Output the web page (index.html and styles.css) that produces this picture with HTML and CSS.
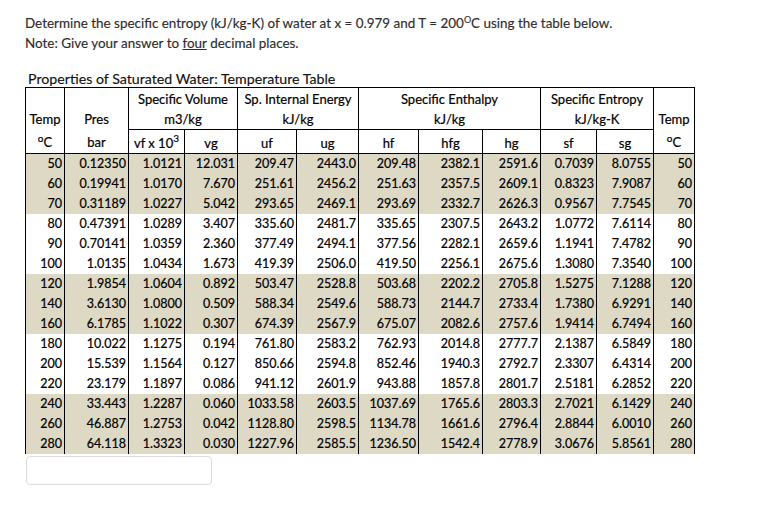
FILE: index.html
```html
<!DOCTYPE html>
<html>
<head>
<meta charset="utf-8">
<link rel="stylesheet" href="styles.css">
</head>
<body>
<div class="page">
  <div class="question">
    <p>Determine the specific entropy (kJ/kg-K) of water at x = 0.979 and T = 200<sup class="qdeg">O</sup>C using the table below.</p>
    <p>Note: Give your answer to <u>four</u> decimal places.</p>
  </div>
  <div class="caption">Properties of Saturated Water: Temperature Table</div>
  <table class="steam">
    <colgroup>
      <col class="c-temp"><col class="c-pres"><col class="c-vf"><col class="c-vg"><col class="c-uf"><col class="c-ug"><col class="c-hf"><col class="c-hfg"><col class="c-hg"><col class="c-sf"><col class="c-sg"><col class="c-temp2">
    </colgroup>
    <thead>
      <tr class="hrow1">
        <th rowspan="2" class="stack">Temp<br><sup class="deg">o</sup>C</th>
        <th rowspan="2" class="stack">Pres<br>bar</th>
        <th colspan="2" class="grp"><span class="clip">Specific Volume</span><br>m3/kg</th>
        <th colspan="2" class="grp">Sp. Internal Energy<br>kJ/kg</th>
        <th colspan="3" class="grp">Specific Enthalpy<br>kJ/kg</th>
        <th colspan="2" class="grp">Specific Entropy<br>kJ/kg-K</th>
        <th rowspan="2" class="stack">Temp<br><sup class="deg">o</sup>C</th>
      </tr>
      <tr class="hrow2">
        <th>vf x 10<sup class="exp">3</sup></th>
        <th>vg</th>
        <th>uf</th>
        <th>ug</th>
        <th>hf</th>
        <th>hfg</th>
        <th>hg</th>
        <th>sf</th>
        <th>sg</th>
      </tr>
    </thead>
    <tbody>
      <tr class="shade"><td>50</td><td>0.12350</td><td>1.0121</td><td>12.031</td><td>209.47</td><td>2443.0</td><td>209.48</td><td>2382.1</td><td>2591.6</td><td>0.7039</td><td>8.0755</td><td>50</td></tr>
      <tr class="shade"><td>60</td><td>0.19941</td><td>1.0170</td><td>7.670</td><td>251.61</td><td>2456.2</td><td>251.63</td><td>2357.5</td><td>2609.1</td><td>0.8323</td><td>7.9087</td><td>60</td></tr>
      <tr class="shade"><td>70</td><td>0.31189</td><td>1.0227</td><td>5.042</td><td>293.65</td><td>2469.1</td><td>293.69</td><td>2332.7</td><td>2626.3</td><td>0.9567</td><td>7.7545</td><td>70</td></tr>
      <tr><td>80</td><td>0.47391</td><td>1.0289</td><td>3.407</td><td>335.60</td><td>2481.7</td><td>335.65</td><td>2307.5</td><td>2643.2</td><td>1.0772</td><td>7.6114</td><td>80</td></tr>
      <tr><td>90</td><td>0.70141</td><td>1.0359</td><td>2.360</td><td>377.49</td><td>2494.1</td><td>377.56</td><td>2282.1</td><td>2659.6</td><td>1.1941</td><td>7.4782</td><td>90</td></tr>
      <tr><td>100</td><td>1.0135</td><td>1.0434</td><td>1.673</td><td>419.39</td><td>2506.0</td><td>419.50</td><td>2256.1</td><td>2675.6</td><td>1.3080</td><td>7.3540</td><td>100</td></tr>
      <tr class="shade"><td>120</td><td>1.9854</td><td>1.0604</td><td>0.892</td><td>503.47</td><td>2528.8</td><td>503.68</td><td>2202.2</td><td>2705.8</td><td>1.5275</td><td>7.1288</td><td>120</td></tr>
      <tr class="shade"><td>140</td><td>3.6130</td><td>1.0800</td><td>0.509</td><td>588.34</td><td>2549.6</td><td>588.73</td><td>2144.7</td><td>2733.4</td><td>1.7380</td><td>6.9291</td><td>140</td></tr>
      <tr class="shade"><td>160</td><td>6.1785</td><td>1.1022</td><td>0.307</td><td>674.39</td><td>2567.9</td><td>675.07</td><td>2082.6</td><td>2757.6</td><td>1.9414</td><td>6.7494</td><td>160</td></tr>
      <tr><td>180</td><td>10.022</td><td>1.1275</td><td>0.194</td><td>761.80</td><td>2583.2</td><td>762.93</td><td>2014.8</td><td>2777.7</td><td>2.1387</td><td>6.5849</td><td>180</td></tr>
      <tr><td>200</td><td>15.539</td><td>1.1564</td><td>0.127</td><td>850.66</td><td>2594.8</td><td>852.46</td><td>1940.3</td><td>2792.7</td><td>2.3307</td><td>6.4314</td><td>200</td></tr>
      <tr><td>220</td><td>23.179</td><td>1.1897</td><td>0.086</td><td>941.12</td><td>2601.9</td><td>943.88</td><td>1857.8</td><td>2801.7</td><td>2.5181</td><td>6.2852</td><td>220</td></tr>
      <tr class="shade"><td>240</td><td>33.443</td><td>1.2287</td><td>0.060</td><td>1033.58</td><td>2603.5</td><td>1037.69</td><td>1765.6</td><td>2803.3</td><td>2.7021</td><td>6.1429</td><td>240</td></tr>
      <tr class="shade"><td>260</td><td>46.887</td><td>1.2753</td><td>0.042</td><td>1128.80</td><td>2598.5</td><td>1134.78</td><td>1661.6</td><td>2796.4</td><td>2.8844</td><td>6.0010</td><td>260</td></tr>
      <tr class="shade"><td>280</td><td>64.118</td><td>1.3323</td><td>0.030</td><td>1227.96</td><td>2585.5</td><td>1236.50</td><td>1542.4</td><td>2778.9</td><td>3.0676</td><td>5.8561</td><td>280</td></tr>
    </tbody>
  </table>
  <div class="answer"></div>
</div>
</body>
</html>
```

FILE: styles.css
```css
html, body {
  margin: 0;
  padding: 0;
  background: #fff;
}

.page {
  padding: 14px 0 0 25px;
}

.question {
  font-family: Lato, "Noto Sans", sans-serif;
  font-size: 13.45px;
  line-height: 19.5px;
  color: #2d2d2d;
  -webkit-text-stroke: 0.15px #2d2d2d;
}

.question p {
  margin: 0;
}

.qdeg {
  font-size: 9px;
  line-height: 0;
  vertical-align: baseline;
  position: relative;
  top: -5px;
}

.caption {
  font-family: Lato, sans-serif;
  font-size: 14.2px;
  line-height: 16px;
  color: #111;
  margin: 18px 0 0 3px;
  -webkit-text-stroke: 0.15px #111;
}

.steam {
  border-collapse: collapse;
  table-layout: fixed;
  width: 669px;
  font-family: Lato, sans-serif;
  font-size: 12.5px;
  color: #000;
  -webkit-text-stroke: 0.2px #000;
}

.c-temp { width: 39px; }
.c-pres { width: 64px; }
.c-vf { width: 56px; }
.c-vg { width: 53px; }
.c-uf { width: 59px; }
.c-ug { width: 62px; }
.c-hf { width: 60px; }
.c-hfg { width: 64px; }
.c-hg { width: 58px; }
.c-sf { width: 56px; }
.c-sg { width: 57px; }
.c-temp2 { width: 41px; }

.steam th {
  font-weight: normal;
  font-size: 13px;
  border: 1px solid #000;
  padding: 0;
  text-align: center;
  white-space: nowrap;
  overflow: hidden;
}

.hrow1 {
  height: 40px;
}

.hrow1 .grp {
  line-height: 20px;
  vertical-align: middle;
  padding-top: 1px;
}

.hrow1 .stack {
  line-height: 22.5px;
  vertical-align: bottom;
}

.hrow2 {
  height: 24px;
}

.hrow2 th {
  line-height: 20px;
  vertical-align: bottom;
}

.exp {
  font-size: 10px;
  line-height: 0;
  vertical-align: baseline;
  position: relative;
  top: -6px;
}

.deg {
  font-size: 10px;
  line-height: 0;
  vertical-align: baseline;
  position: relative;
  top: -5px;
}

.steam td {
  border-left: 1px solid #000;
  border-right: 1px solid #000;
  padding: 0 2px 0 0;
  height: 20px;
  line-height: 20px;
  text-align: right;
  white-space: nowrap;
}

.steam tr.shade {
  background: #ddd9c4;
}

.answer {
  width: 184px;
  height: 27px;
  margin: 2px 0 0 1px;
  border: 1px solid #dcdcdc;
  border-radius: 4px;
  background: #fff;
}
```
